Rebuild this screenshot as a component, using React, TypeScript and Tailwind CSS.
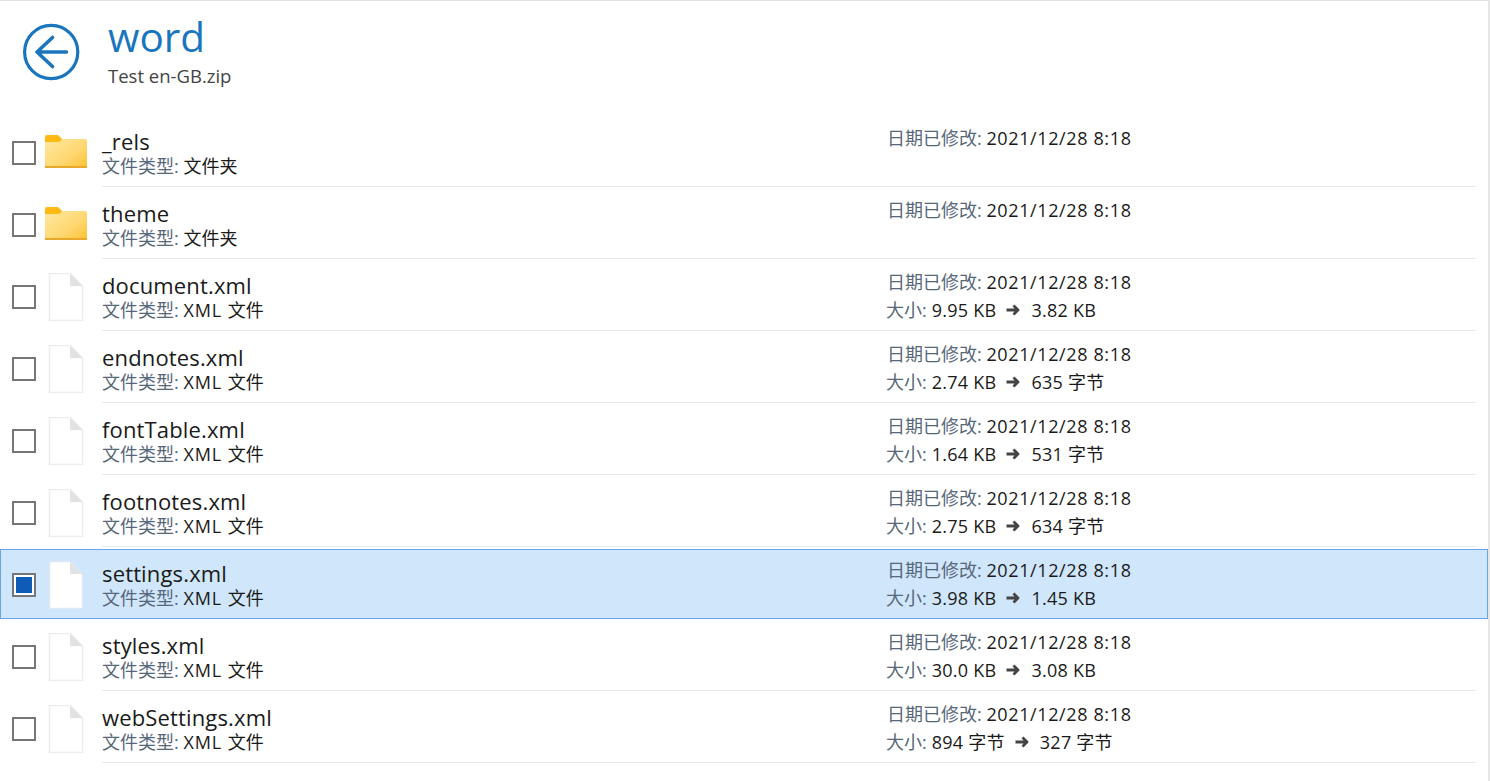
const font = { fontFamily: '"Open Sans","Noto Sans CJK SC",sans-serif' };

type Row = { name: string; from?: string; to?: string; selected?: boolean };

const rows: Row[] = [
  { name: "_rels" },
  { name: "theme" },
  { name: "document.xml", from: "9.95 KB", to: "3.82 KB" },
  { name: "endnotes.xml", from: "2.74 KB", to: "635 字节" },
  { name: "fontTable.xml", from: "1.64 KB", to: "531 字节" },
  { name: "footnotes.xml", from: "2.75 KB", to: "634 字节" },
  { name: "settings.xml", from: "3.98 KB", to: "1.45 KB", selected: true },
  { name: "styles.xml", from: "30.0 KB", to: "3.08 KB" },
  { name: "webSettings.xml", from: "894 字节", to: "327 字节" },
];

function FolderIcon() {
  return (
    <svg width="44" height="36" viewBox="0 0 44 36" className="shrink-0 -ml-[2px]">
      <defs>
        <linearGradient id="fg" x1="0" y1="0" x2="1" y2="1">
          <stop offset="0" stopColor="#ffe7a3" />
          <stop offset="0.6" stopColor="#ffd76f" />
          <stop offset="1" stopColor="#fcc032" />
        </linearGradient>
      </defs>
      <path d="M1 2a2 2 0 0 1 2-2h11l4 4v6H1z" fill="#fdb813" />
      <path d="M1 7h14l4-3h22a2 2 0 0 1 2 2v27H1z" fill="url(#fg)" />
      <rect x="1" y="31" width="42" height="2" fill="#e6a92c" />
    </svg>
  );
}

function FileIcon({ selected }: { selected?: boolean }) {
  return (
    <svg width="44" height="48" viewBox="0 0 44 48" className="shrink-0">
      <path d="M4.5 0.5H25L37.5 13V47.5H4.5z" fill="#ffffff" stroke={selected ? "#dce9f5" : "#ececec"} strokeWidth="1.5" />
      <path d="M25 1V13H37z" fill="#e2e2e2" />
    </svg>
  );
}

function Check({ on }: { on?: boolean }) {
  return (
    <div className="w-6 h-6 shrink-0 border-2 border-[#767676] bg-white flex items-center justify-center">
      {on && <div className="w-4 h-4 bg-[#0f5cb8]" />}
    </div>
  );
}

function ArrowGlyph() {
  return (
    <svg width="14" height="12" viewBox="0 0 14 12" className="ml-[10px] mr-[11px] shrink-0" fill="none" stroke="#444444" strokeWidth="2.8" strokeLinejoin="round">
      <path d="M0.5 6H12M7.5 1.5 12 6 7.5 10.5" />
    </svg>
  );
}

function ItemRow({ row }: { row: Row }) {
  const on = row.selected;
  const folder = !row.from;
  return (
    <div
      className={
        on
          ? "h-[70px] mt-[2px] flex items-center border border-[#6aa5e6] bg-[#d0e6fb]"
          : "h-[72px] flex items-center"
      }
    >
      <div className={on ? "ml-[11px] mr-[9px] mt-[2px]" : "ml-[12px] mr-[9px] mt-[4px]"}><Check on={on} /></div>
      <div className={"w-[44px] flex justify-center " + (on ? "mt-[1px]" : "mt-[3px]")}>
        {folder ? <FolderIcon /> : <FileIcon selected={on} />}
      </div>
      <div className={"ml-[13px] flex-1 self-stretch flex " + (on ? "" : "border-b border-[#e8e8e8] mr-[12px]")}>
        <div className={"w-[785px] " + (on ? "pt-[8px]" : "pt-[11px]")}>
          <div className="text-[22px] leading-[30px] text-[#1a1a1a] tracking-[0.15px]">{row.name}</div>
          <div className="text-[18px] leading-[24px] -mt-[2px] text-[#1a1a1a]">
            <span className="text-[#56687a]">文件类型:</span>{" "}
            {folder ? "文件夹" : <><span className="tracking-[0.9px]">XML </span>文件</>}
          </div>
        </div>
        <div className={"text-[18px] leading-[28px] text-[#1a1a1a] " + (on ? "pt-[6px]" : "pt-[9px]")}>
          <div>
            <span className="text-[#56687a]">日期已修改:</span>{" "}
            <span className="tracking-[0.62px]">2021/12/28 8:18</span>
          </div>
          {row.from && (
            <div className="flex items-center -ml-[1px]">
              <span className="text-[#56687a]">大小:</span>
              <span className="ml-[5px] tracking-[0.25px]">{row.from}</span>
              <ArrowGlyph />
              <span className="tracking-[0.25px]">{row.to}</span>
            </div>
          )}
        </div>
      </div>
    </div>
  );
}

export default function App() {
  return (
    <div style={font} className="w-[1490px] h-[781px] bg-white overflow-hidden border-t border-[#e2e2e2] border-r-2 border-r-[#e6e6e6]">
      <div className="h-[114px] flex pl-[22px]">
        <svg width="60" height="60" viewBox="0 0 60 60" className="mt-[22px] shrink-0" fill="none" stroke="#1a75bf" strokeWidth="3.2" strokeLinecap="round" strokeLinejoin="round">
          <circle cx="29.2" cy="29" r="26.6" />
          <path strokeWidth="3.6" d="M15 29h29.5M30.5 14.5 15 29 30.5 43.5" />
        </svg>
        <div className="ml-[26px]">
          <div className="text-[40.5px] leading-[50px] mt-[11px] text-[#1a75bf]">word</div>
          <div className="text-[18.5px] leading-[24px] mt-[2px] text-[#444444]">Test en-GB.zip</div>
        </div>
      </div>
      {rows.map((r) => (
        <ItemRow key={r.name} row={r} />
      ))}
    </div>
  );
}
